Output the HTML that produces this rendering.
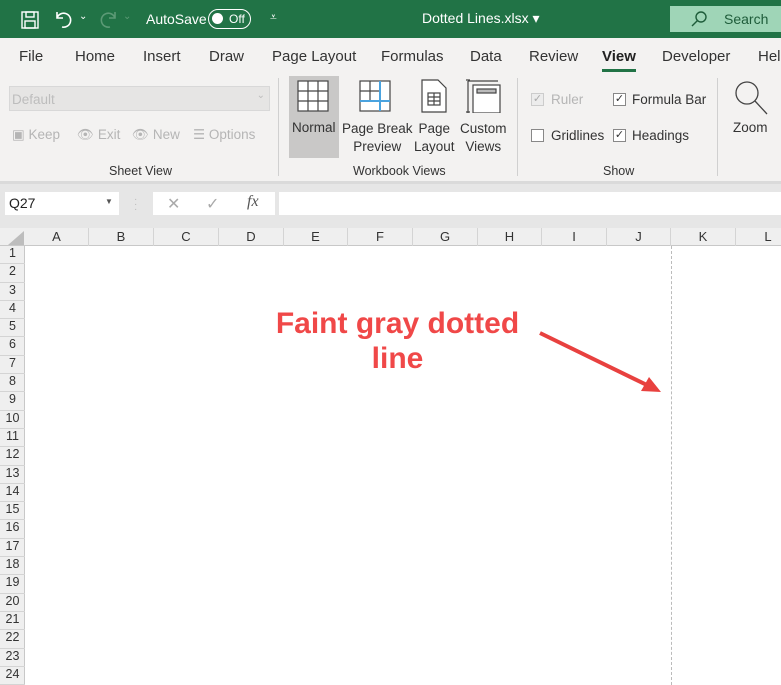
<!DOCTYPE html><html><head><style>
*{margin:0;padding:0;box-sizing:border-box}
body{width:781px;height:685px;overflow:hidden;background:#fff;font-family:"Liberation Sans",sans-serif;position:relative}
.a{position:absolute}
.tb{left:0;top:0;width:781px;height:38px;background:#217346;color:#fff;font-size:14px}
.tabs{top:38px;left:0;width:781px;height:36px;background:#f3f2f1;font-size:15px;color:#333}
.rib{top:74px;left:0;width:781px;height:107px;background:#f3f2f1;font-size:13.5px;color:#333}
.gray{color:#b5b5b5}
.col{top:228px;height:18px;font-size:13px;color:#333;text-align:center;line-height:18px;border-right:1px solid #d4d4d4}
.row{left:0;width:25px;font-size:12.5px;color:#333;text-align:center;border-bottom:1px solid #d4d4d4}
.cb{width:13px;height:13px;border:1px solid #888;background:#fff;font-size:11px;line-height:11px;text-align:center}
</style></head><body>
<div class="a tb">
<svg class="a" style="left:20px;top:10px" width="20" height="20" viewBox="0 0 20 20" fill="none" stroke="#fff" stroke-width="1.4"><rect x="2" y="2" width="16" height="16"/><rect x="6" y="2" width="8" height="5"/><rect x="5" y="11" width="10" height="7"/></svg>
<svg class="a" style="left:54px;top:9px" width="20" height="20" viewBox="0 0 20 20" fill="none" stroke="#fff" stroke-width="1.6"><path d="M3 3v6h6M3 9a7 7 0 1 1 5 9"/></svg>
<div class="a" style="left:79px;top:11px;font-size:10px">⌄</div>
<svg class="a" style="left:98px;top:9px" width="20" height="20" viewBox="0 0 20 20" fill="none" stroke="#5c9a76" stroke-width="1.6"><path d="M17 3v6h-6M17 9a7 7 0 1 0 -5 9"/></svg>
<div class="a" style="left:123px;top:11px;font-size:10px;color:#5c9a76">⌄</div>
<div class="a" style="left:146px;top:11px">AutoSave</div>
<div class="a" style="left:208px;top:9px;width:43px;height:20px;border:1.5px solid #fff;border-radius:10px"><div class="a" style="left:3px;top:3px;width:11px;height:11px;border-radius:50%;background:#fff"></div><div class="a" style="left:20px;top:2px;font-size:12px">Off</div></div>
<div class="a" style="left:270px;top:10px;font-size:12px">⩡</div>
<div class="a" style="left:422px;top:10px">Dotted Lines.xlsx ▾</div>
<div class="a" style="left:670px;top:6px;width:111px;height:26px;background:#9fd5b7;color:#1e5c3a"><svg class="a" style="left:20px;top:4px" width="18" height="18" viewBox="0 0 18 18" fill="none" stroke="#1e5c3a" stroke-width="1.4"><circle cx="11" cy="7" r="5"/><path d="M7.5 10.5L2 16"/></svg><div class="a" style="left:54px;top:5px">Search</div></div>
</div>
<div class="a tabs">
<span class="a" style="left:19px;top:10px">File</span><span class="a" style="left:75px;top:10px">Home</span><span class="a" style="left:143px;top:10px">Insert</span><span class="a" style="left:209px;top:10px">Draw</span><span class="a" style="left:272px;top:10px">Page Layout</span><span class="a" style="left:381px;top:10px">Formulas</span><span class="a" style="left:470px;top:10px">Data</span><span class="a" style="left:529px;top:10px">Review</span><span class="a" style="left:602px;top:10px;font-weight:bold;color:#222">View</span><div class="a" style="left:602px;top:31px;width:34px;height:3px;background:#217346"></div><span class="a" style="left:662px;top:10px">Developer</span><span class="a" style="left:758px;top:10px">Help</span>
</div>
<div class="a rib">
<div class="a" style="left:9px;top:12px;width:261px;height:25px;background:#e6e5e4;border:1px solid #d8d8d8;color:#bdbdbd;font-size:13.5px;padding:5px 2px">Default<span class="a" style="right:4px;top:3px;font-size:10px">⌄</span></div>
<div class="a gray" style="left:12px;top:53px">▣ Keep</div><div class="a gray" style="left:77px;top:53px">👁 Exit</div><div class="a gray" style="left:132px;top:53px">👁 New</div><div class="a gray" style="left:193px;top:53px">☰ Options</div>
<div class="a" style="left:109px;top:90px;font-size:12.5px">Sheet View</div>
<div class="a" style="left:278px;top:4px;width:1px;height:98px;background:#d0d0d0"></div>
<div class="a" style="left:289px;top:2px;width:50px;height:82px;background:#c9c8c7"></div>
<svg class="a" style="left:297px;top:6px" width="32" height="32" viewBox="0 0 32 32" fill="#fff" stroke="#444" stroke-width="1.2"><rect x="1" y="1" width="30" height="30"/><path d="M11 1v30M21 1v30M1 11h30M1 21h30"/></svg>
<div class="a" style="left:292px;top:46px">Normal</div>
<svg class="a" style="left:359px;top:6px" width="32" height="32" viewBox="0 0 32 32" fill="#fff" stroke="#444" stroke-width="1.2"><rect x="1" y="1" width="30" height="30"/><path d="M11 1v20M1 11h20"/><path d="M21 1v30M1 21h30" stroke="#4aa3df" stroke-width="2"/></svg>
<div class="a" style="left:342px;top:46px;text-align:center;line-height:18px">Page Break<br>Preview</div>
<svg class="a" style="left:421px;top:5px" width="26" height="34" viewBox="0 0 26 34" fill="#fff" stroke="#444" stroke-width="1.2"><path d="M1 1h16l8 8v24H1z"/><rect x="7" y="14" width="12" height="12"/><path d="M7 18h12M7 22h12M13 14v12"/></svg>
<div class="a" style="left:414px;top:46px;text-align:center;line-height:18px">Page<br>Layout</div>
<svg class="a" style="left:466px;top:5px" width="36" height="34" viewBox="0 0 36 34" fill="#fff" stroke="#444" stroke-width="1.2"><path d="M2 2h30M2 2v32M0 33h4M0 1h4"/><rect x="7" y="6" width="27" height="28"/><rect x="11" y="10" width="19" height="4" fill="#bbb"/></svg>
<div class="a" style="left:460px;top:46px;text-align:center;line-height:18px">Custom<br>Views</div>
<div class="a" style="left:353px;top:90px;font-size:12.5px">Workbook Views</div>
<div class="a" style="left:517px;top:4px;width:1px;height:98px;background:#d0d0d0"></div>
<div class="a cb" style="left:531px;top:19px;background:#ececec;border-color:#ccc;color:#aaa">✓</div><div class="a gray" style="left:551px;top:18px">Ruler</div>
<div class="a cb" style="left:613px;top:19px">✓</div><div class="a" style="left:632px;top:18px">Formula Bar</div>
<div class="a cb" style="left:531px;top:55px"></div><div class="a" style="left:551px;top:54px">Gridlines</div>
<div class="a cb" style="left:613px;top:55px">✓</div><div class="a" style="left:632px;top:54px">Headings</div>
<div class="a" style="left:603px;top:90px;font-size:12.5px">Show</div>
<div class="a" style="left:717px;top:4px;width:1px;height:98px;background:#d0d0d0"></div>
<svg class="a" style="left:733px;top:6px" width="36" height="36" viewBox="0 0 36 36" fill="none" stroke="#444" stroke-width="1.3"><circle cx="14" cy="13" r="11"/><path d="M22 21l12 13"/></svg>
<div class="a" style="left:733px;top:46px">Zoom</div>
</div>
<div class="a" style="top:181px;left:0;width:781px;height:47px;background:#e6e6e6"></div>
<div class="a" style="top:181px;left:0;width:781px;height:3px;background:#dadada"></div>
<div class="a" style="left:5px;top:192px;width:114px;height:23px;background:#fff;font-size:14px;padding:3px 4px;color:#222">Q27<span class="a" style="left:100px;top:5px;font-size:8px;color:#555">▼</span></div>
<div class="a" style="left:134px;top:197px;color:#bbb;font-size:10px;line-height:5px">·<br>·<br>·</div>
<div class="a" style="left:153px;top:192px;width:122px;height:23px;background:#fff;color:#aaa"><span class="a" style="left:14px;top:2px;font-size:16px">✕</span><span class="a" style="left:53px;top:2px;font-size:16px">✓</span><span class="a" style="left:94px;top:1px;font-family:'Liberation Serif';font-style:italic;font-size:16px;color:#555">fx</span></div>
<div class="a" style="left:279px;top:192px;width:502px;height:23px;background:#fff"></div>
<div class="a" style="left:0;top:228px;width:781px;height:18px;background:#efefef;border-bottom:1px solid #c8c8c8"></div>
<svg class="a" style="left:8px;top:231px" width="16" height="14"><path d="M16 0V14H0z" fill="#bdbdbd"/></svg>
<div class="a" style="left:0;top:246px;width:25px;height:439px;background:#efefef;border-right:1px solid #c8c8c8"></div>
<div class="a col" style="left:25px;width:64px">A</div><div class="a col" style="left:89px;width:65px">B</div><div class="a col" style="left:154px;width:65px">C</div><div class="a col" style="left:219px;width:65px">D</div><div class="a col" style="left:284px;width:64px">E</div><div class="a col" style="left:348px;width:65px">F</div><div class="a col" style="left:413px;width:65px">G</div><div class="a col" style="left:478px;width:64px">H</div><div class="a col" style="left:542px;width:65px">I</div><div class="a col" style="left:607px;width:64px">J</div><div class="a col" style="left:671px;width:65px">K</div><div class="a col" style="left:736px;width:65px">L</div>
<div class="a" style="left:0;top:246px">
<div class="row" style="height:18.3px">1</div><div class="row" style="height:18.3px">2</div><div class="row" style="height:18.3px">3</div><div class="row" style="height:18.3px">4</div><div class="row" style="height:18.3px">5</div><div class="row" style="height:18.3px">6</div><div class="row" style="height:18.3px">7</div><div class="row" style="height:18.3px">8</div><div class="row" style="height:18.3px">9</div><div class="row" style="height:18.3px">10</div><div class="row" style="height:18.3px">11</div><div class="row" style="height:18.3px">12</div><div class="row" style="height:18.3px">13</div><div class="row" style="height:18.3px">14</div><div class="row" style="height:18.3px">15</div><div class="row" style="height:18.3px">16</div><div class="row" style="height:18.3px">17</div><div class="row" style="height:18.3px">18</div><div class="row" style="height:18.3px">19</div><div class="row" style="height:18.3px">20</div><div class="row" style="height:18.3px">21</div><div class="row" style="height:18.3px">22</div><div class="row" style="height:18.3px">23</div><div class="row" style="height:18.3px">24</div>
</div>
<div class="a" style="left:671px;top:246px;width:0;height:439px;border-left:1px dashed #bbb"></div>
<div class="a" style="left:250px;top:306px;width:295px;text-align:center;font-size:30px;font-weight:bold;color:#f04848;line-height:35px">Faint gray dotted<br>line</div>
<svg class="a" style="left:535px;top:325px" width="130" height="75"><path d="M5 8L118 63" stroke="#e8413f" stroke-width="4"/><path d="M126 67L106 66L114 52z" fill="#e8413f"/></svg>
</body></html>
